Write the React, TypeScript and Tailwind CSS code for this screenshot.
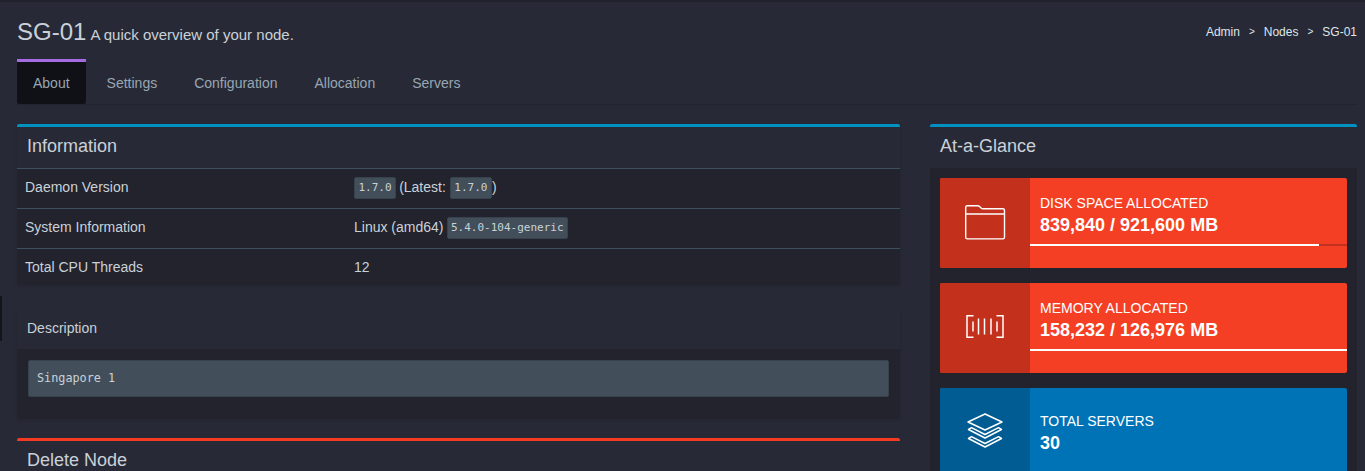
import React from 'react';

const sans = "font-['Liberation_Sans',Arial,sans-serif]";

const FolderIcon = () => (
  <svg width="42" height="36" viewBox="0 0 42 36" fill="none" stroke="white" strokeWidth="1.4" strokeLinejoin="round">
    <path d="M1.7 33.2V3.4c0-1 .7-1.7 1.7-1.7h10.4c1 0 1.3.3 2 1l1.6 1.6c.4.4.8.5 1.4.5h20c1 0 1.7.7 1.7 1.7v26.7c0 1-.7 1.7-1.7 1.7H3.4c-1 0-1.7-.7-1.7-1.7z" />
    <path d="M1.7 10h38.6" />
  </svg>
);

const BarcodeIcon = () => (
  <svg width="38" height="23" viewBox="0 0 38 23" fill="none" stroke="white" strokeWidth="1.5">
    <path d="M7.5 .7H1v21.6h6.5M30.5 .7H37v21.6h-6.5" />
    <path d="M7 6.5v10M12.5 3.5v16M18.5 3.5v16M25 3.5v16M31 6.5v10" />
  </svg>
);

const LayersIcon = () => (
  <svg width="36" height="36" viewBox="0 0 36 36" fill="none" stroke="white" strokeWidth="1.5" strokeLinejoin="round">
    <path d="M18 1L35 9 18 17 1 9z" />
    <path d="M4.5 14.7L1.5 16.5 18 25l16.5-8.5-3-1.8L18 21.5z" />
    <path d="M4.5 23.7L1.5 25.5 18 34l16.5-8.5-3-1.8L18 30.5z" />
  </svg>
);

const Code = ({ children }: { children: React.ReactNode }) => (
  <code className="mt-[2px] inline-block h-[22px] rounded-[2px] border border-[#36424d] bg-[#424f5a] px-[3.5px] font-['DejaVu_Sans_Mono',monospace] text-[11px] leading-[20px] text-[#cad1d8]">
    {children}
  </code>
);

const Row = ({ label, children }: { label: string; children: React.ReactNode }) => (
  <div className="flex h-10 items-center border-t border-[#3d4f5c] pb-1 pl-2">
    <div className="w-[321px]">{label}</div>
    <div className="flex items-center pl-2">{children}</div>
  </div>
);

interface InfoBoxProps {
  icon: React.ReactNode;
  title: string;
  value: string;
  color: string;
  iconColor: string;
  iconOffset: string;
  progress?: number;
}

const InfoBox = ({ icon, title, value, color, iconColor, iconOffset, progress }: InfoBoxProps) => (
  <div className={`flex h-[90px] overflow-hidden rounded-[2px] text-white ${color}`}>
    <div className={`flex w-[90px] shrink-0 items-center justify-center ${iconColor} ${iconOffset}`}>{icon}</div>
    <div className="flex-1">
      <div className={`pl-2.5 text-sm leading-5 ${progress === undefined ? 'pt-[23px]' : 'pt-[15px]'}`}>{title}</div>
      <div className="mt-0.5 pl-2.5 text-lg leading-5 font-bold">{value}</div>
      {progress !== undefined && (
        <div className="mt-[9px] h-0.5 bg-[#c23020]">
          <div className="h-0.5 bg-white" style={{ width: `${progress}%` }} />
        </div>
      )}
    </div>
  </div>
);

export default function App() {
  return (
    <div className={`relative h-[471px] overflow-hidden border-t-2 border-[#20212a] bg-[#272a36] text-[#cad1d8] ${sans}`}>
      <div className="absolute top-[294px] left-0 h-[45px] w-0.5 bg-[#14151b]" />
      <div className="pr-2 pl-[17px]">
        <header className="flex h-[57px] items-start justify-between">
          <div className="pt-[14px] leading-7">
            <span className="text-2xl text-[#cad1d8]">SG-01</span>
            <span className="ml-[4px] text-[15px] text-[#cad1d8]">A quick overview of your node.</span>
          </div>
          <div className="flex gap-[9px] pt-[22px] text-xs leading-4 text-[#dfe5ea]">
            <span>Admin</span>
            <span className="text-[10px]">&gt;</span>
            <span>Nodes</span>
            <span className="text-[10px]">&gt;</span>
            <span>SG-01</span>
          </div>
        </header>

        <nav className="flex h-[46px] gap-[5px] border-b border-[#23242e] text-sm text-[#98a6b3]">
          <div className="rounded-b-[2px] border-t-[3px] border-[#a56be0] bg-[#0f1116] px-4 pt-[11px]">About</div>
          <div className="px-4 pt-3.5">Settings</div>
          <div className="px-4 pt-3.5">Configuration</div>
          <div className="px-4 pt-3.5">Allocation</div>
          <div className="px-4 pt-3.5">Servers</div>
        </nav>

        <div className="mt-[19px] flex gap-[30px]">
          <div className="w-[883px] shrink-0">
            <section className="rounded-t-[2px] border-t-[3px] border-[#0091c1] shadow-[0_1px_3px_rgba(0,0,0,0.12)]">
              <h3 className="h-[41px] px-2.5 text-lg leading-[39px]">Information</h3>
              <div className="h-[117px] overflow-hidden bg-[#22232d] text-sm">
                <Row label="Daemon Version">
                  <Code>1.7.0</Code>
                  <span className="mr-1 ml-[3px]">(Latest:</span>
                  <Code>1.7.0</Code>
                  <span>)</span>
                </Row>
                <Row label="System Information">
                  <span className="mr-[3px]">Linux (amd64)</span>
                  <Code>5.4.0-104-generic</Code>
                </Row>
                <Row label="Total CPU Threads">12</Row>
              </div>
            </section>

            <section className="mt-[23px] shadow-[0_1px_3px_rgba(0,0,0,0.12)]">
              <h3 className="h-[41px] px-2.5 pt-3 text-sm leading-4">Description</h3>
              <div className="h-[70px] bg-[#22232d] px-[11px] pt-[11px]">
                <pre className="h-[37px] rounded-[2px] border border-[#36424d] bg-[#424f5a] px-2 font-['DejaVu_Sans_Mono',monospace] text-[11.8px] leading-[35px] text-[#cad1d8]">
                  Singapore 1
                </pre>
              </div>
            </section>

            <section className="mt-[19px] rounded-t-[2px] border-t-[3px] border-[#f53a22]">
              <h3 className="px-2.5 pt-[7px] text-lg leading-6">Delete Node</h3>
            </section>
          </div>

          <aside className="w-[427px] shrink-0 rounded-t-[2px] border-t-[3px] border-[#0091c1]">
            <h3 className="h-[41px] px-2.5 text-lg leading-[39px]">At-a-Glance</h3>
            <div className="flex flex-col gap-[15px] bg-[#22232d] px-2.5 pt-2.5">
              <InfoBox
                icon={<FolderIcon />}
                title="DISK SPACE ALLOCATED"
                value="839,840 / 921,600 MB"
                color="bg-[#f53f25]"
                iconColor="bg-[#c3301c]"
                iconOffset="pb-[3px]"
                progress={91.2}
              />
              <InfoBox
                icon={<BarcodeIcon />}
                title="MEMORY ALLOCATED"
                value="158,232 / 126,976 MB"
                color="bg-[#f53f25]"
                iconColor="bg-[#c3301c]"
                iconOffset="pb-[3px]"
                progress={100}
              />
              <InfoBox
                icon={<LayersIcon />}
                title="TOTAL SERVERS"
                value="30"
                color="bg-[#0073b7]"
                iconColor="bg-[#005c92]"
                iconOffset="pb-[5px]"
              />
            </div>
          </aside>
        </div>
      </div>
    </div>
  );
}
